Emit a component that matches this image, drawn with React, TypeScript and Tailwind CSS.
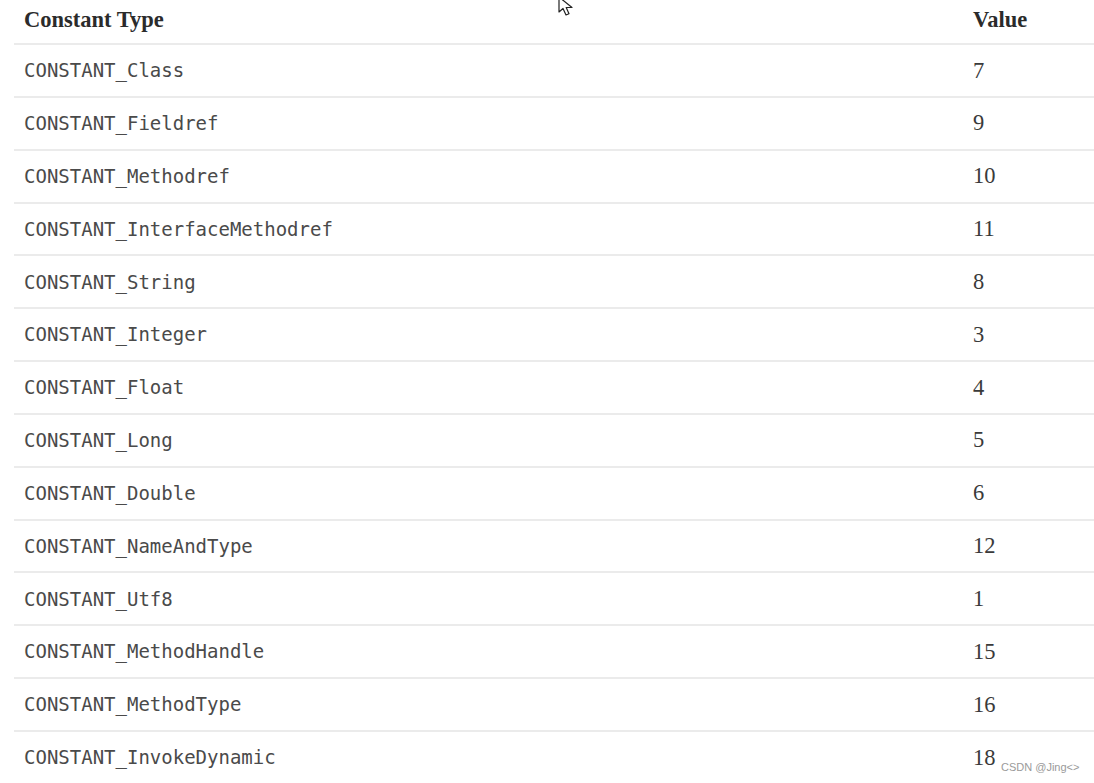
const rows: [string, string][] = [
  ["CONSTANT_Class", "7"],
  ["CONSTANT_Fieldref", "9"],
  ["CONSTANT_Methodref", "10"],
  ["CONSTANT_InterfaceMethodref", "11"],
  ["CONSTANT_String", "8"],
  ["CONSTANT_Integer", "3"],
  ["CONSTANT_Float", "4"],
  ["CONSTANT_Long", "5"],
  ["CONSTANT_Double", "6"],
  ["CONSTANT_NameAndType", "12"],
  ["CONSTANT_Utf8", "1"],
  ["CONSTANT_MethodHandle", "15"],
  ["CONSTANT_MethodType", "16"],
  ["CONSTANT_InvokeDynamic", "18"],
];

function Cursor() {
  return (
    <svg
      className="absolute left-[558px] top-[-4px]"
      width="18"
      height="21"
      viewBox="0 0 18 21"
    >
      <path
        d="M1 1 L1 16 L5 12.5 L8 19 L11 17.8 L8.2 11.5 L14 11.5 Z"
        fill="#fff"
        stroke="#222"
        strokeWidth="1.2"
        strokeLinejoin="round"
      />
    </svg>
  );
}

export default function App() {
  return (
    <div className="relative w-[1094px] h-[783px] overflow-hidden bg-white">
      <Cursor />
      <div className="pl-[14px]">
        <div className="flex h-[43px] items-center text-[#2b2b2b] font-bold text-[22.5px]" style={{ fontFamily: '"Liberation Serif", serif' }}>
          <div className="w-[959px] pl-[10px] pb-[4px]">Constant Type</div>
          <div className="pb-[4px]">Value</div>
        </div>
        {rows.map(([name, value]) => (
          <div
            key={name}
            className="flex h-[52.85px] items-center border-t-2 border-[#ebebeb]"
          >
            <div
              className="w-[959px] pl-[10px] text-[19px] text-[#4a4a4a]"
              style={{ fontFamily: '"DejaVu Sans Mono", monospace' }}
            >
              {name}
            </div>
            <div
              className="text-[22.5px] text-[#3a3a3a]"
              style={{ fontFamily: '"Liberation Serif", serif' }}
            >
              {value}
            </div>
          </div>
        ))}
      </div>
      <div
        className="absolute left-[1001px] top-[759px] text-[11px] text-[#9a9a9a]"
        style={{ fontFamily: '"Liberation Sans", sans-serif' }}
      >
        CSDN @Jing&lt;&gt;
      </div>
    </div>
  );
}
